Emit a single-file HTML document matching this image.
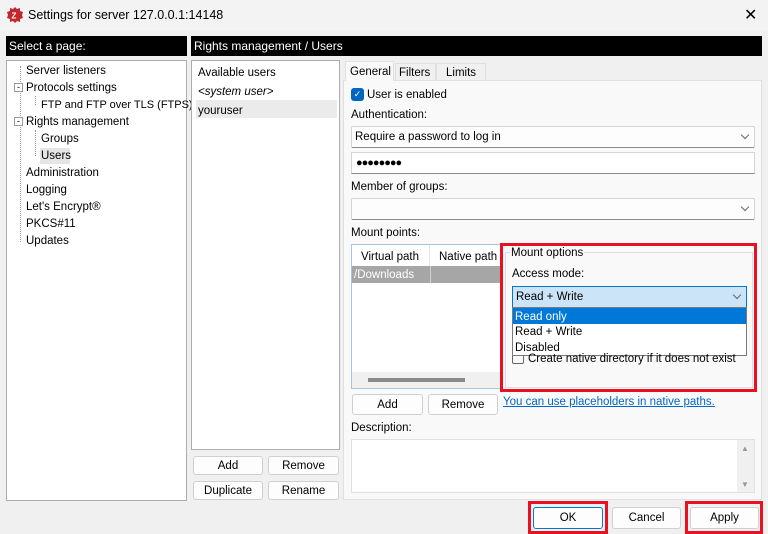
<!DOCTYPE html>
<html><head><style>
*{box-sizing:border-box;margin:0;padding:0}
body{width:768px;height:534px;overflow:hidden;background:#f0f0f0;font-family:"Liberation Sans",sans-serif;font-size:11.5px;color:#000;position:relative}
.a{position:absolute}
.t{position:absolute;white-space:nowrap;margin-top:1px}
.bar{background:#000;color:#fff;height:20px;line-height:20px;padding-left:3px;font-size:12px}
.box{background:#fff;border:1px solid #adadad}
.btn{position:absolute;background:#fdfdfd;border:1px solid #d0d0d0;border-radius:3px;text-align:center;line-height:18px}
.combo{position:absolute;background:#fdfdfd;border:1px solid #d5d5d5;border-bottom-color:#8a8a8a;border-radius:2px;padding-left:3px;line-height:20px}
.chev{position:absolute;right:6px;top:5px;width:6px;height:6px;border-right:1px solid #666;border-bottom:1px solid #666;transform:rotate(45deg)}
.red{position:absolute;border:3px solid #e81123}
.dot{border-left:1px dotted #999}
</style></head><body>
<div class="a" style="left:0;top:0;width:768px;height:31px;background:#f3f3f3"></div>
<svg class="a" style="left:7px;top:7px" width="16" height="16" viewBox="0 0 16 16"><path d="M8 0l2 2 3-1 0 3 3 1-1 3 1 3-3 1 0 3-3-1-2 2-2-2-3 1 0-3-3-1 1-3-1-3 3-1 0-3 3 1z" fill="#c1272d"/><text x="4.5" y="11.5" font-size="8" fill="#fff" font-family="Liberation Sans" font-weight="bold">Z</text></svg>
<div class="t" style="left:28px;top:7px;font-size:12.5px">Settings for server 127.0.0.1:14148</div>
<div class="t" style="left:744px;top:4px;font-size:16px">✕</div>
<div class="a bar" style="left:6px;top:36px;width:181px">Select a page:</div>
<div class="a bar" style="left:191px;top:36px;width:571px">Rights management / Users</div>
<div class="a box" style="left:6px;top:60px;width:181px;height:441px"></div>
<div class="a dot" style="left:20px;top:66px;height:176px"></div>
<div class="a dot" style="left:35px;top:96px;height:9px"></div>
<div class="a dot" style="left:35px;top:130px;height:26px"></div>
<div class="a" style="left:14px;top:83px;width:9px;height:9px;border:1px solid #999;background:#fff;font-size:9px;line-height:6px;text-align:center">-</div>
<div class="a" style="left:14px;top:117px;width:9px;height:9px;border:1px solid #999;background:#fff;font-size:9px;line-height:6px;text-align:center">-</div>
<div class="t" style="left:26px;top:64px">Server listeners</div>
<div class="t" style="left:26px;top:81px">Protocols settings</div>
<div class="t" style="left:41px;top:98px;font-size:11px">FTP and FTP over TLS (FTPS)</div>
<div class="t" style="left:26px;top:115px">Rights management</div>
<div class="t" style="left:41px;top:132px">Groups</div>
<div class="a" style="left:40px;top:148px;width:30px;height:16px;background:#e5e5e5"></div>
<div class="t" style="left:41px;top:149px">Users</div>
<div class="t" style="left:26px;top:166px">Administration</div>
<div class="t" style="left:26px;top:183px">Logging</div>
<div class="t" style="left:26px;top:200px">Let's Encrypt®</div>
<div class="t" style="left:26px;top:217px">PKCS#11</div>
<div class="t" style="left:26px;top:234px">Updates</div>
<div class="a box" style="left:191px;top:60px;width:149px;height:390px"></div>
<div class="t" style="left:198px;top:66px">Available users</div>
<div class="t" style="left:198px;top:85px;font-style:italic">&lt;system user&gt;</div>
<div class="a" style="left:196px;top:100px;width:141px;height:18px;background:#ebebeb"></div>
<div class="t" style="left:198px;top:104px">youruser</div>
<div class="btn" style="left:193px;top:456px;width:70px;height:19px">Add</div>
<div class="btn" style="left:268px;top:456px;width:71px;height:19px">Remove</div>
<div class="btn" style="left:193px;top:481px;width:70px;height:19px">Duplicate</div>
<div class="btn" style="left:268px;top:481px;width:71px;height:19px">Rename</div>
<div class="a" style="left:343px;top:80px;width:419px;height:420px;background:#f9f9f9;border:1px solid #e0e0e0"></div>
<div class="a" style="left:345px;top:61px;width:49px;height:20px;background:#f9f9f9;border:1px solid #e0e0e0;border-bottom:none"></div>
<div class="a" style="left:395px;top:63px;width:41px;height:17px;background:#f0f0f0;border:1px solid #e0e0e0;border-bottom:none"></div>
<div class="a" style="left:436px;top:63px;width:50px;height:17px;background:#f0f0f0;border:1px solid #e0e0e0;border-bottom:none"></div>
<div class="t" style="left:350px;top:65px">General</div>
<div class="t" style="left:399px;top:66px">Filters</div>
<div class="t" style="left:446px;top:66px">Limits</div>
<div class="a" style="left:351px;top:88px;width:13px;height:13px;background:#0067c0;border-radius:3px;color:#fff;font-size:9px;line-height:13px;text-align:center">✓</div>
<div class="t" style="left:367px;top:88px">User is enabled</div>
<div class="t" style="left:351px;top:108px">Authentication:</div>
<div class="combo" style="left:351px;top:126px;width:404px;height:22px">Require a password to log in<div class="chev"></div></div>
<div class="a" style="left:351px;top:152px;width:404px;height:22px;background:#fff;border:1px solid #d5d5d5;border-bottom-color:#8a8a8a;padding-left:4px;line-height:20px;font-size:11px;letter-spacing:-1px">●●●●●●●●</div>
<div class="t" style="left:351px;top:180px">Member of groups:</div>
<div class="combo" style="left:351px;top:198px;width:404px;height:22px"><div class="chev"></div></div>
<div class="t" style="left:351px;top:226px">Mount points:</div>
<div class="a" style="left:351px;top:244px;width:150px;height:145px;background:#fff;border:1px solid #a9c4dc"></div>
<div class="a" style="left:352px;top:245px;width:78px;height:21px;border-right:1px solid #e5e5e5"></div>
<div class="t" style="left:361px;top:250px">Virtual path</div>
<div class="t" style="left:439px;top:250px">Native path</div>
<div class="a" style="left:352px;top:266px;width:148px;height:17px;background:#a6a6a6"></div>
<div class="a" style="left:430px;top:266px;width:1px;height:17px;background:#d0d0d0"></div>
<div class="t" style="left:354px;top:268px;color:#fff">/Downloads</div>
<div class="a" style="left:352px;top:372px;width:148px;height:16px;background:#f0f0f0"></div>
<div class="a" style="left:368px;top:378px;width:97px;height:4px;background:#8a8a8a"></div>
<div class="a" style="left:505px;top:252px;width:248px;height:136px;border:1px solid #dcdcdc"></div>
<div class="t" style="left:510px;top:246px;background:#f9f9f9;padding:0 1px">Mount options</div>
<div class="t" style="left:512px;top:267px">Access mode:</div>
<div class="a" style="left:512px;top:286px;width:235px;height:22px;background:#cce4f7;border:1px solid #0078d7;padding-left:3px;line-height:21px">Read + Write<div class="chev"></div></div>
<div class="a" style="left:512px;top:307px;width:235px;height:49px;background:#fff;border:1px solid #7a7a7a"></div>
<div class="a" style="left:513px;top:308px;width:233px;height:16px;background:#0078d7"></div>
<div class="t" style="left:515px;top:310px;color:#fff">Read only</div>
<div class="t" style="left:515px;top:325px">Read + Write</div>
<div class="t" style="left:515px;top:341px">Disabled</div>
<div class="a" style="left:512px;top:356px;width:12px;height:8px;border:1px solid #666;border-top:none;border-radius:0 0 2px 2px"></div>
<div class="t" style="left:528px;top:352px;height:12px;overflow:hidden">Create native directory if it does not exist</div>
<div class="red" style="left:500px;top:243px;width:257px;height:149px"></div>
<div class="btn" style="left:352px;top:394px;width:71px;height:21px;line-height:20px">Add</div>
<div class="btn" style="left:428px;top:394px;width:70px;height:21px;line-height:20px">Remove</div>
<div class="t" style="left:503px;top:395px;color:#0066cc;text-decoration:underline">You can use placeholders in native paths.</div>
<div class="t" style="left:351px;top:421px">Description:</div>
<div class="a" style="left:351px;top:439px;width:404px;height:54px;background:#fff;border:1px solid #e0e0e0"></div>
<div class="a" style="left:737px;top:440px;width:17px;height:52px;background:#f0f0f0"></div>
<div class="t" style="left:741px;top:443px;font-size:8px;color:#999">▲</div>
<div class="t" style="left:741px;top:479px;font-size:8px;color:#999">▼</div>
<div class="btn" style="left:533px;top:507px;width:70px;height:22px;line-height:21px;border-color:#0078d7">OK</div>
<div class="btn" style="left:612px;top:507px;width:69px;height:22px;line-height:21px">Cancel</div>
<div class="btn" style="left:690px;top:507px;width:69px;height:22px;line-height:21px">Apply</div>
<div class="red" style="left:528px;top:501px;width:80px;height:33px"></div>
<div class="red" style="left:685px;top:501px;width:78px;height:33px"></div>
</body></html>
